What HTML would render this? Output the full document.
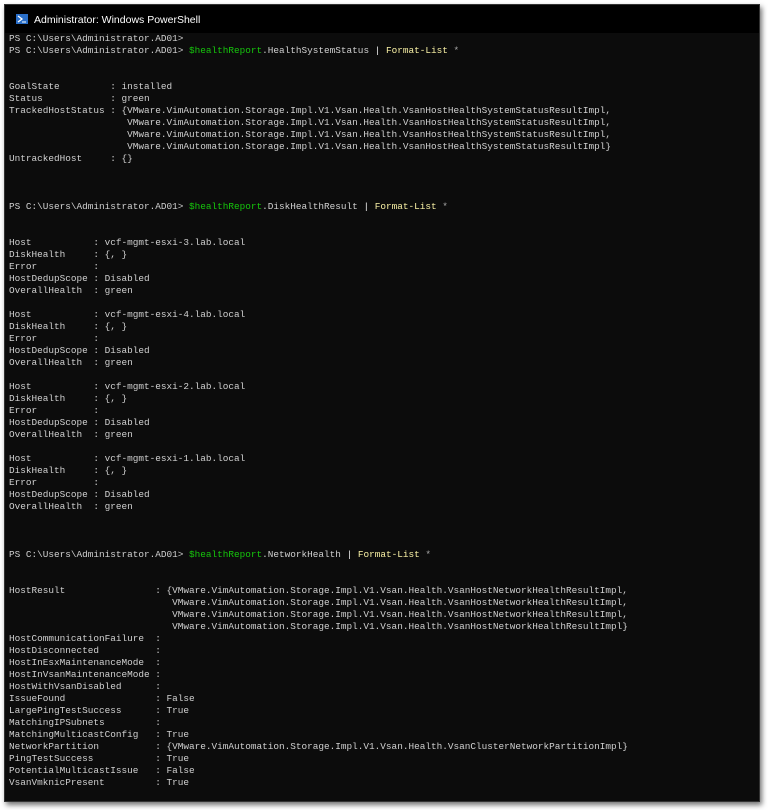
<!DOCTYPE html>
<html><head><style>
html,body{margin:0;padding:0;background:#fff;width:768px;height:810px;overflow:hidden}
.win{position:absolute;left:4px;top:4px;width:754px;height:796px;background:#0c0c0c;border:1px solid #333;box-shadow:2px 3px 5px rgba(0,0,0,.55)}
.title{position:absolute;left:0;top:0;width:754px;height:28px;background:#000;color:#fff;font:10.5px "Liberation Sans",sans-serif}
.title span{position:absolute;left:29px;top:9px}
.icon{position:absolute;left:11px;top:9px;width:12px;height:10px;background:#2a6fc9}
pre{position:absolute;left:4px;top:28px;margin:0;font:9.4px/12px "Liberation Mono",monospace;color:#d0d0d0;white-space:pre}
.g{color:#16c60c}.y{color:#f9f1a5}.w{color:#eee}.gr{color:#aaa}
</style></head><body>
<div class="win">
<div class="title"><div class="icon"><svg width="12" height="10"><path d="M2 2l4 3-4 3" stroke="#fff" stroke-width="1.3" fill="none"/><path d="M6 8h4" stroke="#fff" stroke-width="1"/></svg></div><span>Administrator: Windows PowerShell</span></div>
<pre>PS C:\Users\Administrator.AD01&gt;
PS C:\Users\Administrator.AD01&gt; <span class="g">$healthReport</span>.HealthSystemStatus <span class="w">|</span> <span class="y">Format-List</span> <span class="gr">*</span>


GoalState         : installed
Status            : green
TrackedHostStatus : {VMware.VimAutomation.Storage.Impl.V1.Vsan.Health.VsanHostHealthSystemStatusResultImpl,
                     VMware.VimAutomation.Storage.Impl.V1.Vsan.Health.VsanHostHealthSystemStatusResultImpl,
                     VMware.VimAutomation.Storage.Impl.V1.Vsan.Health.VsanHostHealthSystemStatusResultImpl,
                     VMware.VimAutomation.Storage.Impl.V1.Vsan.Health.VsanHostHealthSystemStatusResultImpl}
UntrackedHost     : {}



PS C:\Users\Administrator.AD01&gt; <span class="g">$healthReport</span>.DiskHealthResult <span class="w">|</span> <span class="y">Format-List</span> <span class="gr">*</span>


Host           : vcf-mgmt-esxi-3.lab.local
DiskHealth     : {, }
Error          :
HostDedupScope : Disabled
OverallHealth  : green

Host           : vcf-mgmt-esxi-4.lab.local
DiskHealth     : {, }
Error          :
HostDedupScope : Disabled
OverallHealth  : green

Host           : vcf-mgmt-esxi-2.lab.local
DiskHealth     : {, }
Error          :
HostDedupScope : Disabled
OverallHealth  : green

Host           : vcf-mgmt-esxi-1.lab.local
DiskHealth     : {, }
Error          :
HostDedupScope : Disabled
OverallHealth  : green



PS C:\Users\Administrator.AD01&gt; <span class="g">$healthReport</span>.NetworkHealth <span class="w">|</span> <span class="y">Format-List</span> <span class="gr">*</span>


HostResult                : {VMware.VimAutomation.Storage.Impl.V1.Vsan.Health.VsanHostNetworkHealthResultImpl,
                             VMware.VimAutomation.Storage.Impl.V1.Vsan.Health.VsanHostNetworkHealthResultImpl,
                             VMware.VimAutomation.Storage.Impl.V1.Vsan.Health.VsanHostNetworkHealthResultImpl,
                             VMware.VimAutomation.Storage.Impl.V1.Vsan.Health.VsanHostNetworkHealthResultImpl}
HostCommunicationFailure  :
HostDisconnected          :
HostInEsxMaintenanceMode  :
HostInVsanMaintenanceMode :
HostWithVsanDisabled      :
IssueFound                : False
LargePingTestSuccess      : True
MatchingIPSubnets         :
MatchingMulticastConfig   : True
NetworkPartition          : {VMware.VimAutomation.Storage.Impl.V1.Vsan.Health.VsanClusterNetworkPartitionImpl}
PingTestSuccess           : True
PotentialMulticastIssue   : False
VsanVmknicPresent         : True</pre>
</div>
</body></html>
